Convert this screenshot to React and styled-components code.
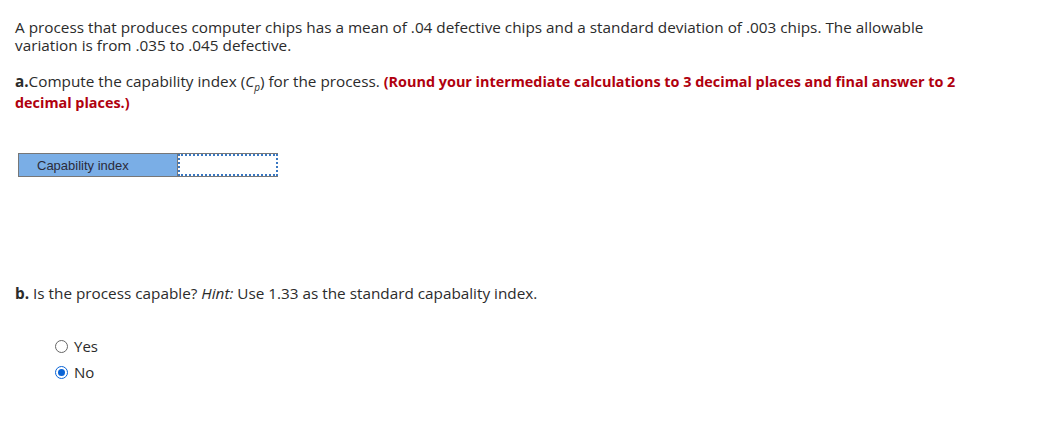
import React from "react";
import styled, { createGlobalStyle } from "styled-components";

const Global = createGlobalStyle`
  html, body { margin: 0; padding: 0; background: #fff; }
  body { font-family: "Open Sans", "Liberation Sans", sans-serif; color: #2b2b2b; }
`;

const Page = styled.div`
  padding: 18px 15px 0 15px;
  width: 1019px;
  box-sizing: border-box;
`;

const Para = styled.p`
  margin: 0;
  font-size: 15.3px;
  line-height: 18px;
  max-width: ${(p) => p.$max || 945}px;
`;

const PartPara = styled(Para)`
  margin-top: ${(p) => p.$mt || 0}px;
  line-height: 21px;
`;

const Red = styled.strong`
  color: #b0000e;
  font-weight: 700;
  font-size: 14.4px;
`;

const Sub = styled.sub`
  font-size: 10px;
  line-height: 0;
  font-style: italic;
`;

const Table = styled.table`
  border-collapse: collapse;
  margin: 40px 0 0 3px;
`;

const LabelCell = styled.td`
  background: #7aaee6;
  border: 1px solid #777;
  width: 140px;
  height: 22px;
  padding: 0 0 0 18px;
  font-family: "Liberation Sans", Arial, sans-serif;
  font-size: 13px;
  color: #2b2b3a;
`;

const InputCell = styled.td`
  border-top: 1px solid #777;
  border-bottom: 1px solid #777;
  padding: 0;
  width: 100px;
  height: 22px;
`;

const Input = styled.div`
  width: 100%;
  height: 22px;
  box-sizing: border-box;
  border: 2px dotted #3a78c2;
`;

const Options = styled.div`
  display: flex;
  flex-direction: column;
  gap: 6px;
  margin: 32px 0 0 40px;
`;

const Option = styled.label`
  display: flex;
  align-items: center;
  gap: 6px;
  font-size: 15px;
  line-height: 20px;
`;

const Radio = styled.span`
  width: 13px;
  height: 13px;
  box-sizing: border-box;
  border-radius: 50%;
  border: ${(p) => (p.$checked ? "1px solid #0a64d6" : "1px solid #666")};
  background: #fff;
  display: flex;
  align-items: center;
  justify-content: center;
  &::after {
    content: "";
    width: 7px;
    height: 7px;
    border-radius: 50%;
    background: ${(p) => (p.$checked ? "#0a64d6" : "transparent")};
  }
`;

export default function App() {
  return (
    <>
      <Global />
      <Page>
        <Para $max={910}>
          A process that produces computer chips has a mean of .04 defective chips and a standard deviation of .003 chips. The allowable variation is from .035 to .045 defective.
        </Para>
        <PartPara $mt={17}>
          <b>a.</b>Compute the capability index (<i>C</i><Sub>p</Sub>) for the process.{" "}
          <Red>(Round your intermediate calculations to 3 decimal places and final answer to 2 decimal places.)</Red>
        </PartPara>
        <Table>
          <tbody>
            <tr>
              <LabelCell>Capability index</LabelCell>
              <InputCell><Input /></InputCell>
            </tr>
          </tbody>
        </Table>
        <PartPara $mt={106}>
          <b>b.</b> Is the process capable? <i>Hint:</i> Use 1.33 as the standard capabality index.
        </PartPara>
        <Options>
          <Option><Radio /> Yes</Option>
          <Option><Radio $checked /> No</Option>
        </Options>
      </Page>
    </>
  );
}
